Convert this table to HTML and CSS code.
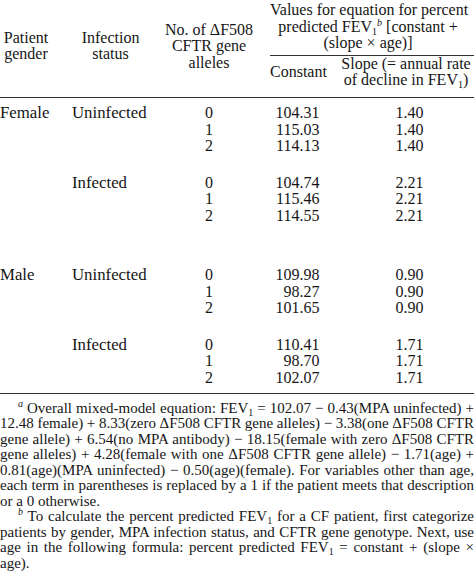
FILE: index.html
```html
<!DOCTYPE html>
<html lang="en">
<head>
<meta charset="utf-8">
<title>FEV1 equation table</title>
<link rel="stylesheet" href="styles.css">
</head>
<body>
<table class="fev">
  <colgroup>
    <col class="w1"><col class="w2"><col class="w3"><col class="w4"><col class="w5">
  </colgroup>
  <thead>
    <tr>
      <th rowspan="2" class="h-gender">Patient<br>gender</th>
      <th rowspan="2" class="h-status">Infection<br>status</th>
      <th rowspan="2" class="h-alleles">No. of &Delta;F508<br>CFTR gene<br>alleles</th>
      <th colspan="2" class="h-group">Values for equation for percent<br>predicted FEV<sub>1</sub><sup class="mk">b</sup> [constant +<br>(slope &times; age)]</th>
    </tr>
    <tr>
      <th class="h-const">Constant</th>
      <th class="h-slope">Slope (= annual rate<br>of decline in FEV<sub>1</sub>)</th>
    </tr>
  </thead>
  <tbody>
    <tr class="top"><td class="gender">Female</td><td class="status">Uninfected</td><td class="alleles">0</td><td class="const">104.31</td><td class="slope">1.40</td></tr>
    <tr><td class="gender"></td><td class="status"></td><td class="alleles">1</td><td class="const">115.03</td><td class="slope">1.40</td></tr>
    <tr><td class="gender"></td><td class="status"></td><td class="alleles">2</td><td class="const">114.13</td><td class="slope">1.40</td></tr>
    <tr class="grp"><td class="gender"></td><td class="status">Infected</td><td class="alleles">0</td><td class="const">104.74</td><td class="slope">2.21</td></tr>
    <tr><td class="gender"></td><td class="status"></td><td class="alleles">1</td><td class="const">115.46</td><td class="slope">2.21</td></tr>
    <tr><td class="gender"></td><td class="status"></td><td class="alleles">2</td><td class="const">114.55</td><td class="slope">2.21</td></tr>
    <tr class="sex"><td class="gender">Male</td><td class="status">Uninfected</td><td class="alleles">0</td><td class="const">109.98</td><td class="slope">0.90</td></tr>
    <tr><td class="gender"></td><td class="status"></td><td class="alleles">1</td><td class="const">98.27</td><td class="slope">0.90</td></tr>
    <tr><td class="gender"></td><td class="status"></td><td class="alleles">2</td><td class="const">101.65</td><td class="slope">0.90</td></tr>
    <tr class="grp"><td class="gender"></td><td class="status">Infected</td><td class="alleles">0</td><td class="const">110.41</td><td class="slope">1.71</td></tr>
    <tr><td class="gender"></td><td class="status"></td><td class="alleles">1</td><td class="const">98.70</td><td class="slope">1.71</td></tr>
    <tr class="last"><td class="gender"></td><td class="status"></td><td class="alleles">2</td><td class="const">102.07</td><td class="slope">1.71</td></tr>
  </tbody>
</table>
<div class="notes">
  <p class="note">
    <span class="ln first"><sup class="mk">a</sup> Overall mixed-model equation: FEV<sub>1</sub> = 102.07 &minus; 0.43(MPA uninfected) +</span>
    <span class="ln">12.48 female) + 8.33(zero &Delta;F508 CFTR gene alleles) &minus; 3.38(one &Delta;F508 CFTR</span>
    <span class="ln">gene allele) + 6.54(no MPA antibody) &minus; 18.15(female with zero &Delta;F508 CFTR</span>
    <span class="ln">gene alleles) + 4.28(female with one &Delta;F508 CFTR gene allele) &minus; 1.71(age) +</span>
    <span class="ln">0.81(age)(MPA uninfected) &minus; 0.50(age)(female). For variables other than age,</span>
    <span class="ln">each term in parentheses is replaced by a 1 if the patient meets that description</span>
    <span class="ln end">or a 0 otherwise.</span>
  </p>
  <p class="note">
    <span class="ln first"><sup class="mk">b</sup> To calculate the percent predicted FEV<sub>1</sub> for a CF patient, first categorize</span>
    <span class="ln">patients by gender, MPA infection status, and CFTR gene genotype. Next, use</span>
    <span class="ln">age in the following formula: percent predicted FEV<sub>1</sub> = constant + (slope &times;</span>
    <span class="ln end">age).</span>
  </p>
</div>
</body>
</html>
```

FILE: styles.css
```css
html, body {
  margin: 0;
  padding: 0;
  background: #ffffff;
}

body {
  color: #161616;
  font-family: "Liberation Serif", "Times New Roman", serif;
  width: 474px;
  overflow: hidden;
}

.fev {
  width: 474px;
  table-layout: fixed;
  border-collapse: separate;
  border-spacing: 0;
  font-size: 16px;
  border-bottom: 1.5px solid #333333;
}

.w1 { width: 62px; }
.w2 { width: 98px; }
.w3 { width: 110px; }
.w4 { width: 68px; }
.w5 { width: 136px; }

th {
  font-weight: normal;
  line-height: 16.5px;
  padding: 0;
  white-space: nowrap;
  text-align: center;
}

td {
  padding: 0;
  line-height: 16.6px;
  white-space: nowrap;
}

sub {
  font-size: 10px;
  line-height: 0;
  vertical-align: -3px;
}

.mk {
  font-size: 10px;
  line-height: 0;
  font-style: italic;
  vertical-align: 6px;
}

/* header */
.h-gender,
.h-status,
.h-alleles {
  vertical-align: middle;
  padding-bottom: 4px;
  border-bottom: 1.5px solid #333333;
}

.h-gender { padding-right: 10px; }
.h-status { padding-left: 10px; padding-right: 11px; }
.h-alleles { padding-right: 12px; }

.h-group {
  vertical-align: top;
  padding-top: 2px;
  padding-bottom: 3px;
  padding-right: 8px;
  border-bottom: 1.5px solid #333333;
}

.h-const,
.h-slope {
  padding-bottom: 8px;
  border-bottom: 1.5px solid #333333;
}

.h-const {
  vertical-align: middle;
  padding-right: 12px;
}

.h-slope {
  vertical-align: top;
}

/* body */
td.gender,
td.status {
  font-size: 16.8px;
  text-align: left;
}

td.status { padding-left: 10px; }

td.alleles {
  text-align: center;
  padding-right: 12px;
}

td.const {
  text-align: right;
  padding-right: 18.5px;
}

td.slope {
  text-align: center;
  padding-left: 7px;
}

tr.top td { padding-top: 7.5px; }
tr.grp td { padding-top: 20px; }
tr.sex td { padding-top: 42.5px; }
tr.last td { padding-bottom: 6.5px; }

/* footnotes */
.notes {
  margin-top: 6.5px;
  font-size: 15px;
  line-height: 15.5px;
}

.note {
  margin: 0;
}

.ln {
  display: block;
  text-align: justify;
  text-align-last: justify;
  word-spacing: -1px;
}

.ln.first {
  text-indent: 18px;
}

.ln.end {
  text-align-last: left;
  word-spacing: 0;
}
```
